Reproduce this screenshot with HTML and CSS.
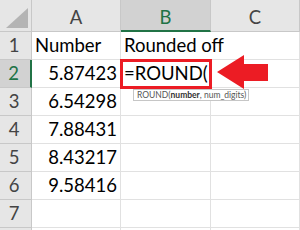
FILE: index.html
```html
<!DOCTYPE html>
<html>
<head>
<meta charset="utf-8">
<link rel="stylesheet" href="styles.css">
</head>
<body>
<div class="sheet">
  <div class="grid">
    <div class="hd corner"><svg class="tri" width="22" height="20" viewBox="0 0 22 20"><polygon points="22,0 22,20 0,20" fill="#b4b4b4"/></svg></div>
    <div class="hd col">A</div>
    <div class="hd col sel-col">B</div>
    <div class="hd col">C</div>
    <div class="hd col last"></div>

    <div class="hd row">1</div>
    <div class="c">Number</div>
    <div class="c spill">Rounded off</div>
    <div class="c"></div>
    <div class="c last"></div>

    <div class="hd row sel-row">2</div>
    <div class="c num">5.87423</div>
    <div class="c active">=ROUND(<span class="caret"></span></div>
    <div class="c"></div>
    <div class="c last"></div>

    <div class="hd row">3</div>
    <div class="c num">6.54298</div>
    <div class="c"></div>
    <div class="c"></div>
    <div class="c last"></div>

    <div class="hd row">4</div>
    <div class="c num">7.88431</div>
    <div class="c"></div>
    <div class="c"></div>
    <div class="c last"></div>

    <div class="hd row">5</div>
    <div class="c num">8.43217</div>
    <div class="c"></div>
    <div class="c"></div>
    <div class="c last"></div>

    <div class="hd row">6</div>
    <div class="c num">9.58416</div>
    <div class="c"></div>
    <div class="c"></div>
    <div class="c last"></div>

    <div class="hd row">7</div>
    <div class="c"></div>
    <div class="c"></div>
    <div class="c"></div>
    <div class="c last"></div>

    <div class="hd row"></div>
    <div class="c"></div>
    <div class="c"></div>
    <div class="c"></div>
    <div class="c last"></div>
  </div>

  <div class="tip">ROUND(<b>number</b>, num_digits)</div>

  <svg class="arrow" width="54" height="37" viewBox="0 0 54 37">
    <polygon points="1,18 28,1 28,10 52,10 52,27 28,27 28,35" fill="#ec1c24"/>
  </svg>
</div>
</body>
</html>
```
FILE: styles.css
```css
html, body {
  margin: 0;
  padding: 0;
  background: #ffffff;
}
body {
  width: 300px;
  height: 230px;
  overflow: hidden;
  font-family: Lato, "Open Sans", sans-serif;
}
.sheet {
  position: relative;
  width: 300px;
  height: 230px;
  overflow: hidden;
}
.grid {
  display: grid;
  grid-template-columns: 32px 89px 90px 89px 20px;
  grid-template-rows: 32px;
  grid-auto-rows: 28px;
}
.grid > div {
  box-sizing: border-box;
  border-right: 1px solid #e1e1e1;
  border-bottom: 1px solid #e1e1e1;
  font-size: 18.5px;
  color: #000;
  white-space: nowrap;
  line-height: 27px;
}
.grid > .hd {
  background: #e6e6e6;
  color: #444444;
  border-right-color: #c8c8c8;
  border-bottom-color: #c8c8c8;
}
.corner {
  position: relative;
}
.tri {
  position: absolute;
  right: 3px;
  bottom: 3px;
}
.col {
  text-align: center;
  padding-top: 4px;
}
.row {
  text-align: center;
  padding-right: 3px;
}
.grid > .sel-col {
  background: #d2d2d2;
  color: #217346;
  border-bottom: 2px solid #217346;
}
.grid > .sel-row {
  background: #d2d2d2;
  color: #217346;
  border-right: 2px solid #217346;
}
.c {
  padding: 0 3px;
}
.num {
  text-align: right;
}
.grid > .spill {
  border-right-color: transparent;
  overflow: visible;
}
.active {
  outline: 3px solid #ec1c24;
  outline-offset: -2px;
  position: relative;
}
.caret {
  display: inline-block;
  width: 1px;
  height: 22px;
  background: #000;
  margin-left: 1px;
  vertical-align: -5px;
}
.grid > .last {
  border-right: none;
}
.tip {
  position: absolute;
  left: 133px;
  top: 89px;
  height: 12px;
  box-sizing: border-box;
  padding: 0 2px 0 3px;
  background: #fff;
  border: 1px solid #c6c6c6;
  font-size: 8.5px;
  line-height: 10px;
  color: #555;
  white-space: nowrap;
}
.tip b {
  color: #333;
  font-weight: bold;
}
.arrow {
  position: absolute;
  left: 216px;
  top: 54px;
}
```
